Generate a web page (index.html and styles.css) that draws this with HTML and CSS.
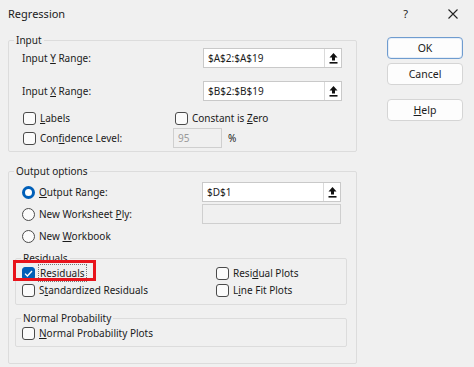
FILE: index.html
```html
<!DOCTYPE html>
<html>
<head>
<meta charset="utf-8">
<link rel="stylesheet" href="styles.css">
</head>
<body>
<div class="dialog">
  <div class="titlebar">
    <span class="title">Regression</span>
    <span class="help-q">?</span>
    <svg class="close" width="10" height="10" viewBox="0 0 10 10"><path d="M0.5 0.5 L9.5 9.5 M9.5 0.5 L0.5 9.5" stroke="#222" stroke-width="1.1" fill="none"/></svg>
  </div>
  <div class="main">
    <div class="left">
      <fieldset class="group input-group">
        <legend>Input</legend>
        <div class="row field-row">
          <span class="label">Input <u>Y</u> Range:</span>
          <div class="range"><span class="val">$A$2:$A$19</span><span class="pick"><svg width="9" height="11" viewBox="0 0 9 11"><path d="M4.5 0 L0.5 4.5 L3 4.5 L3 7.5 L6 7.5 L6 4.5 L8.5 4.5 Z" fill="#111"/><rect x="0.5" y="9" width="8" height="1.6" fill="#111"/></svg></span></div>
        </div>
        <div class="row field-row gap13">
          <span class="label">Input <u>X</u> Range:</span>
          <div class="range"><span class="val">$B$2:$B$19</span><span class="pick"><svg width="9" height="11" viewBox="0 0 9 11"><path d="M4.5 0 L0.5 4.5 L3 4.5 L3 7.5 L6 7.5 L6 4.5 L8.5 4.5 Z" fill="#111"/><rect x="0.5" y="9" width="8" height="1.6" fill="#111"/></svg></span></div>
        </div>
        <div class="row check-row labels-row">
          <span class="opt w153"><span class="cb"></span><span class="t"><u>L</u>abels</span></span>
          <span class="opt"><span class="cb"></span><span class="t">Constant is <u>Z</u>ero</span></span>
        </div>
        <div class="row conf-row">
          <span class="opt w151"><span class="cb"></span><span class="t">Con<u>f</u>idence Level:</span></span>
          <span class="small-input">95</span>
          <span class="pct">%</span>
        </div>
      </fieldset>

      <fieldset class="group output-group">
        <legend>Output options</legend>
        <div class="row field-row radio-row first">
          <span class="opt"><span class="rb on"></span><span class="t"><u>O</u>utput Range:</span></span>
          <div class="range"><span class="val">$D$1</span><span class="pick"><svg width="9" height="11" viewBox="0 0 9 11"><path d="M4.5 0 L0.5 4.5 L3 4.5 L3 7.5 L6 7.5 L6 4.5 L8.5 4.5 Z" fill="#111"/><rect x="0.5" y="9" width="8" height="1.6" fill="#111"/></svg></span></div>
        </div>
        <div class="row field-row radio-row">
          <span class="opt"><span class="rb"></span><span class="t">New Worksheet <u>P</u>ly:</span></span>
          <div class="range disabled"></div>
        </div>
        <div class="row field-row radio-row">
          <span class="opt"><span class="rb"></span><span class="t">New <u>W</u>orkbook</span></span>
        </div>

        <fieldset class="group sub residuals">
          <legend>Residuals</legend>
          <div class="row check-row">
            <span class="opt w194 marked"><span class="cb checked"><svg width="9" height="7" viewBox="0 0 9 7"><path d="M1 3.6 L3.4 6 L8 1" stroke="#fff" stroke-width="1.3" fill="none"/></svg></span><span class="focus"><u>R</u>esiduals</span><span class="redbox"></span></span>
            <span class="opt"><span class="cb"></span><span class="t">Resi<u>d</u>ual Plots</span></span>
          </div>
          <div class="row check-row">
            <span class="opt w194"><span class="cb"></span><span class="t">S<u>t</u>andardized Residuals</span></span>
            <span class="opt"><span class="cb"></span><span class="t">L<u>i</u>ne Fit Plots</span></span>
          </div>
        </fieldset>

        <fieldset class="group sub normal">
          <legend>Normal Probability</legend>
          <div class="row check-row">
            <span class="opt"><span class="cb"></span><span class="t"><u>N</u>ormal Probability Plots</span></span>
          </div>
        </fieldset>
      </fieldset>
    </div>

    <div class="buttons">
      <button class="btn default">OK</button>
      <button class="btn">Cancel</button>
      <button class="btn help"><u>H</u>elp</button>
    </div>
  </div>
</div>
</body>
</html>
```

FILE: styles.css
```css
* { box-sizing: border-box; }
html, body { margin: 0; padding: 0; }
body {
  background: #f0f0f0;
  font-family: "Noto Sans", "Open Sans", sans-serif;
  font-size: 10px;
  color: #1b1b1b;
  width: 474px;
  height: 367px;
  overflow: hidden;
}
u { text-decoration: underline; text-underline-offset: 1px; }

.titlebar {
  height: 27px;
  display: flex;
  align-items: center;
  padding-left: 8px;
}
.title { font-size: 11px; flex: 1; }
.help-q { font-size: 11px; margin-right: 40px; color: #222; }
.close { margin-right: 16px; }

.main {
  display: flex;
  padding-left: 8px;
}
.left { width: 349px; }

.group {
  margin: 0;
  border: 1px solid #dcdcdc;
  border-radius: 2px;
  min-width: 0;
}
.group > legend {
  padding: 0 2px;
  line-height: 14px;
}
.input-group {
  margin-top: 6px;
  padding: 0 14px 3px 13px;
}
.input-group > legend { margin-left: -8px; }

.row { display: flex; align-items: center; }
.field-row { height: 20px; margin-top: 1px; }
.field-row .label { width: 180px; }
.gap13 { margin-top: 13px; }

.range {
  margin-left: auto;
  width: 139px;
  height: 20px;
  background: #fff;
  border: 1px solid #c9c9c9;
  display: flex;
  align-items: center;
  padding-left: 4px;
}
.range .val { flex: 1; font-size: 10px; }
.range .pick {
  width: 17px;
  height: 18px;
  border-left: 1px solid #dadada;
  display: flex;
  align-items: center;
  justify-content: center;
}
.range.disabled { background: #f0f0f0; border-color: #cfcfcf; }

.check-row { height: 16px; }
.labels-row { margin-top: 9px; padding-left: 1px; }
.conf-row { height: 20px; margin-top: 2px; padding-left: 1px; }

.opt { display: flex; align-items: center; white-space: nowrap; }
.w153 { width: 152px; }
.w151 { width: 150px; }
.w194 { width: 194px; }

.cb {
  width: 13px; height: 13px;
  border: 1px solid #4a4a4a;
  border-radius: 3px;
  background: #fbfbfb;
  margin-right: 4px;
  flex: none;
  display: flex; align-items: center; justify-content: center;
}
.cb.checked { background: #005fb8; border-color: #005fb8; }

.rb {
  width: 13px; height: 13px;
  border: 1px solid #4a4a4a;
  border-radius: 50%;
  background: #fbfbfb;
  margin-right: 4px;
  flex: none;
}
.rb.on {
  border: 3.5px solid #005fb8;
  background: #fff;
}

.small-input {
  width: 49px; height: 20px;
  border: 1px solid #cfcfcf;
  background: #f0f0f0;
  color: #9a9a9a;
  font-size: 10px;
  padding-left: 4px;
  display: flex; align-items: center;
}
.pct { margin-left: 6px; }

.output-group {
  margin-top: 12px;
  padding: 0 9px 16px 6px;
}
.output-group > legend { margin-left: -1px; }
.radio-row { padding-left: 7px; }
.radio-row.first { margin-top: 4px; }
.radio-row + .radio-row { margin-top: 2px; }
.radio-row .range { margin-right: 6px; }

.sub {
  padding: 0 6px 6px 6px;
  border-color: #dcdcdc;
}
.sub > legend { margin-left: -1px; }
.residuals { margin-top: 5px; }
.residuals .check-row + .check-row { margin-top: 1px; }
.normal { margin-top: 6px; padding-bottom: 5px; }

.marked { position: relative; }
.focus {
  border: 1px dotted #777;
  padding: 0 1px;
  margin-left: -1px;
  line-height: 16px;
}
.redbox {
  position: absolute;
  left: -9px; top: -4px;
  width: 83px; height: 21px;
  border: 3px solid #e8141c;
}

.buttons {
  margin-left: 30px;
  margin-top: 10px;
  width: 76px;
  display: flex;
  flex-direction: column;
}
.btn {
  font-family: inherit;
  font-size: 10.5px;
  color: #1b1b1b;
  height: 22px;
  background: #fdfdfd;
  border: 1px solid #d5d5d5;
  border-radius: 4px;
  padding: 0;
}
.btn.default { border-color: #6f9ccf; box-shadow: inset 0 0 0 1px #e6eef8; }
.btn + .btn { margin-top: 4px; }
.btn.help { margin-top: 14px; }
```
